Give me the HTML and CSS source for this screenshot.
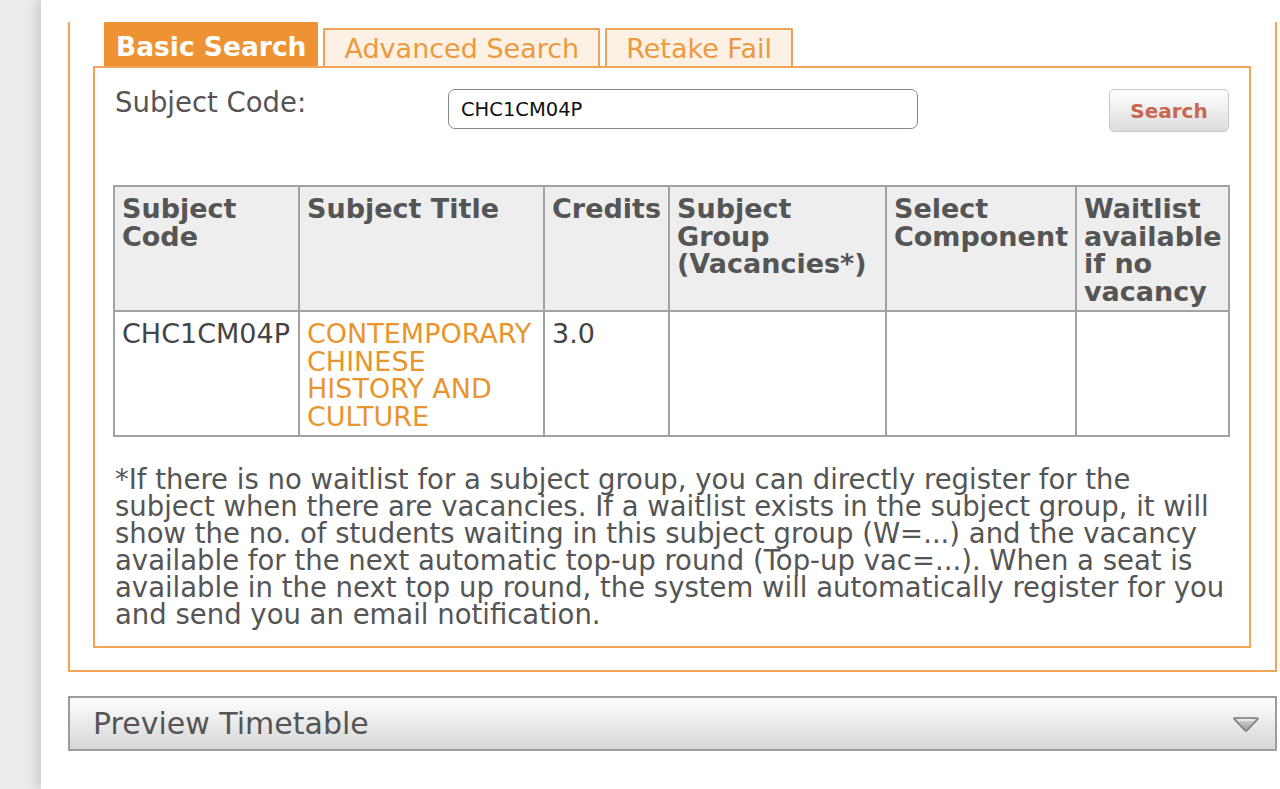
FILE: index.html
```html
<!DOCTYPE html>
<html>
<head>
	<title>Subject Registration</title>
	<link rel="stylesheet" href="styles.css">
</head>
<body>
	<div class="page">
		<div class="search-box">
			<div class="tabs">
				<div class="tab active">Basic Search</div>
				<div class="tab">Advanced Search</div>
				<div class="tab">Retake Fail</div>
			</div>
			<div class="tab-panel">
				<div class="search-row">
					<label class="search-label">Subject Code:</label>
					<input class="search-input" type="text" value="CHC1CM04P">
					<button class="search-btn">Search</button>
				</div>

				<table class="subject-table">
					<colgroup>
						<col class="c-code">
						<col class="c-title">
						<col class="c-credits">
						<col class="c-group">
						<col class="c-comp">
						<col class="c-wait">
					</colgroup>
					<thead>
						<tr>
							<th>Subject Code</th>
							<th>Subject Title</th>
							<th>Credits</th>
							<th>Subject Group (Vacancies*)</th>
							<th>Select Component</th>
							<th>Waitlist available if no vacancy</th>
						</tr>
					</thead>
					<tbody>
						<tr>
							<td>CHC1CM04P</td>
							<td class="subject-title">CONTEMPORARY CHINESE HISTORY AND CULTURE</td>
							<td>3.0</td>
							<td></td>
							<td></td>
							<td></td>
						</tr>
					</tbody>
				</table>

				<p class="note">*If there is no waitlist for a subject group, you can directly register for the subject when there are vacancies. If a waitlist exists in the subject group, it will show the no. of students waiting in this subject group (W=...) and the vacancy available for the next automatic top-up round (Top-up vac=...). When a seat is available in the next top up round, the system will automatically register for you and send you an email notification.</p>
			</div>
		</div>

		<div class="collapsible">
			<span class="collapsible-title">Preview Timetable</span>
			<svg class="collapsible-icon" width="28" height="18" viewBox="0 0 28 18">
				<defs>
					<linearGradient id="arrowfill" x1="0" y1="0" x2="0" y2="1">
						<stop offset="0" stop-color="#d8d8d8"/>
						<stop offset="1" stop-color="#9a9a9a"/>
					</linearGradient>
				</defs>
				<path d="M3 3 L25 3 Q26.5 3 25.6 4.3 L15.2 15.2 Q14 16.4 12.8 15.2 L2.4 4.3 Q1.5 3 3 3 Z" fill="url(#arrowfill)" stroke="#7a7a7a" stroke-width="1.6" stroke-linejoin="round"/>
				<path d="M6 5 L22 5" stroke="#f4f4f4" stroke-width="1.4"/>
			</svg>
		</div>
	</div>
</body>
</html>
```

FILE: styles.css
```css
*{
	box-sizing: border-box;
}

body{
	margin: 0;
	background-color: #ececec;
	font-family: "DejaVu Sans", Verdana, sans-serif;
	color: #555;
}

.page{
	margin-left: 41px;
	min-height: 789px;
	background-color: #fff;
	box-shadow: -6px 0 10px rgba(0,0,0,0.12);
	padding: 22px 3px 0 27px;
}

.search-box{
	border: 2px solid #f0a558;
	border-top: none;
	padding: 0 24px 22px 23px;
}

.tabs{
	display: flex;
	align-items: flex-end;
	gap: 5px;
	padding-left: 11px;
}

.tab{
	height: 38px;
	padding: 0 19px;
	border: 2px solid #eea356;
	border-bottom: none;
	background-color: #fdf1e6;
	color: #eb9a3e;
	font-size: 27px;
	line-height: 38px;
	border-radius: 2px 2px 0 0;
}

.tab.active{
	height: 44px;
	padding: 0 10px;
	background-color: #ee9233;
	border-color: #ee9233;
	color: #fff;
	font-size: 26.5px;
	font-weight: bold;
	line-height: 45px;
}

.tab-panel{
	border: 2px solid #f0a558;
	padding: 21px 20px 18px 20px;
}

.search-row{
	display: flex;
	align-items: center;
	height: 43px;
}

.search-label{
	width: 333px;
	font-size: 27.5px;
	color: #555;
	margin-top: -18px;
}

.search-input{
	width: 470px;
	height: 40px;
	border: 1.5px solid #888;
	border-radius: 7px;
	padding: 0 12px;
	font-family: "DejaVu Sans", Verdana, sans-serif;
	font-size: 19.5px;
	color: #111;
	margin-top: -3px;
}

.search-btn{
	margin-left: auto;
	width: 120px;
	height: 43px;
	border: 1px solid #c8c8c8;
	border-radius: 5px;
	background: linear-gradient(#ffffff, #dcdcdc);
	color: #c9664f;
	font-family: "DejaVu Sans", Verdana, sans-serif;
	font-size: 20px;
	font-weight: bold;
}

.subject-table{
	margin: 53px 0 0 -2px;
	border-collapse: collapse;
	table-layout: fixed;
	width: 1115px;
	border: 2px solid #a2a2a2;
}

.c-code{ width: 185px; }
.c-title{ width: 245px; }
.c-credits{ width: 125px; }
.c-group{ width: 217px; }
.c-comp{ width: 190px; }
.c-wait{ width: 153px; }

.subject-table th,
.subject-table td{
	border: 2px solid #a2a2a2;
	padding: 8px 7px 4px 7px;
	vertical-align: top;
	text-align: left;
	font-size: 27px;
	line-height: 27.5px;
}

.subject-table th{
	background-color: #eeeeee;
	font-weight: bold;
	color: #555;
	height: 125px;
}

.subject-table td{
	height: 125px;
	color: #444;
}

.subject-table td.subject-title{
	color: #e8952d;
}

.note{
	margin: 29px 0 0 0;
	font-size: 27.5px;
	line-height: 27px;
	color: #555;
}

.collapsible{
	margin-top: 24px;
	height: 55px;
	border: 2px solid #9c9c9c;
	background: linear-gradient(#fefefe, #d6d6d6);
	display: flex;
	align-items: center;
	justify-content: space-between;
	padding: 0 15px 0 23px;
}

.collapsible-title{
	font-size: 30px;
	color: #555;
}
```
